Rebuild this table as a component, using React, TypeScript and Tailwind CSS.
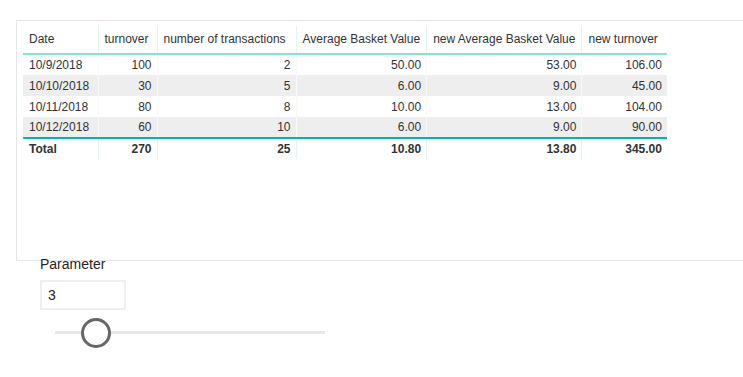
import React from 'react';

type Row = {
  date: string;
  turnover: string;
  transactions: string;
  avg: string;
  newAvg: string;
  newTurnover: string;
};

const rows: Row[] = [
  { date: '10/9/2018', turnover: '100', transactions: '2', avg: '50.00', newAvg: '53.00', newTurnover: '106.00' },
  { date: '10/10/2018', turnover: '30', transactions: '5', avg: '6.00', newAvg: '9.00', newTurnover: '45.00' },
  { date: '10/11/2018', turnover: '80', transactions: '8', avg: '10.00', newAvg: '13.00', newTurnover: '104.00' },
  { date: '10/12/2018', turnover: '60', transactions: '10', avg: '6.00', newAvg: '9.00', newTurnover: '90.00' },
];

const cols = [
  { label: 'Date', w: 'w-[75px]', align: 'text-left' },
  { label: 'turnover', w: 'w-[59px]', align: 'text-right' },
  { label: 'number of transactions', w: 'w-[139px]', align: 'text-right' },
  { label: 'Average Basket Value', w: 'w-[129px]', align: 'text-right' },
  { label: 'new Average Basket Value', w: 'w-[155px]', align: 'text-right' },
  { label: 'new turnover', w: 'w-[85px]', align: 'text-right' },
];

export default function App() {
  return (
    <div
      className="w-[743px] h-[377px] overflow-hidden bg-white text-[#333333]"
      style={{ fontFamily: '"Liberation Sans", Arial, sans-serif' }}
    >
      {/* table visual */}
      <div className="ml-[16px] mt-[20px] w-[760px] h-[241px] border border-[#e6e6e6] pl-[6px] pt-[5px]">
        <table className="border-collapse text-[12px] leading-none">
          <thead>
            <tr className="h-[28px] border-b-2 border-[#86e3d9]">
              {cols.map((c, i) => (
                <th
                  key={c.label}
                  className={`${c.w} font-normal text-left whitespace-nowrap px-[6px] pb-[2px] align-middle ${i > 0 ? 'border-l border-[#e1f6f3]' : ''}`}
                >
                  {c.label}
                </th>
              ))}
            </tr>
          </thead>
          <tbody>
            {rows.map((r, idx) => {
              const cells = [r.date, r.turnover, r.transactions, r.avg, r.newAvg, r.newTurnover];
              return (
                <tr key={r.date} className={`h-[21px] ${idx % 2 === 1 ? 'bg-[#eeeeee]' : 'bg-white'}`}>
                  {cells.map((v, i) => (
                    <td
                      key={i}
                      className={`${cols[i].align} whitespace-nowrap pl-[6px] pr-[5px] ${i > 0 ? 'border-l border-[#f8f8f8]' : ''}`}
                    >
                      {v}
                    </td>
                  ))}
                </tr>
              );
            })}
            <tr className="h-[21px] border-t-2 border-[#01b8aa] font-bold">
              {['Total', '270', '25', '10.80', '13.80', '345.00'].map((v, i) => (
                <td
                  key={i}
                  className={`${cols[i].align} whitespace-nowrap pl-[6px] pr-[5px] ${i > 0 ? 'border-l border-[#e1f6f3]' : ''}`}
                >
                  {v}
                </td>
              ))}
            </tr>
          </tbody>
        </table>
      </div>

      {/* slicer */}
      <div className="ml-[40px] -mt-[5px]">
        <div className="text-[14px] leading-[16px] text-[#252423]">Parameter</div>
        <div className="mt-[8px] w-[86px] h-[30px] border-2 border-[#efefef] flex items-center pl-[6px] text-[14px] text-[#252423]">
          3
        </div>
        <div className="relative ml-[15px] mt-[21px] w-[270px] h-[3px] bg-[#e8e8e8]">
          <div className="absolute left-[26px] top-[-13px] w-[30px] h-[30px] rounded-full border-[3px] border-[#666666] bg-white" />
        </div>
      </div>
    </div>
  );
}
